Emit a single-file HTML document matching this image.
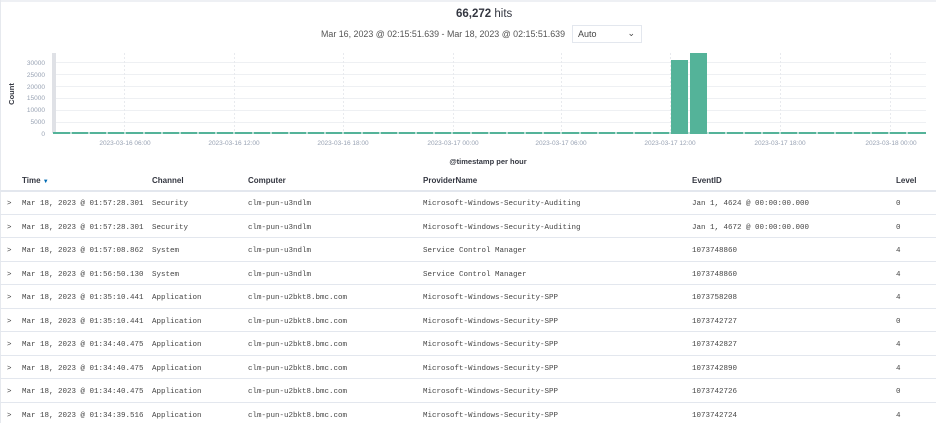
<!DOCTYPE html><html><head><style>
body{margin:0;width:936px;height:423px;background:#fff;position:relative;overflow:hidden;font-family:"Liberation Sans",sans-serif;color:#343741}
.a{position:absolute;white-space:nowrap}
.m{font-family:"Liberation Mono",monospace;font-size:7.5px;color:#444}
.h{font-size:8px;font-weight:bold;color:#343741}
.row{position:absolute;left:0;width:936px;height:1px;background:#e3e7ee}
</style></head><body>
<div class="a" style="left:0;top:0;width:936px;height:2px;background:#eef0f4"></div>
<div class="a" style="left:0;top:0;width:1px;height:423px;background:#e6e9ee"></div>
<div class="a" style="left:456px;top:8px;font-size:11.5px"><b>66,272</b> hits</div>
<div class="a" style="left:321px;top:29px;font-size:8.9px;color:#555">Mar 16, 2023 @ 02:15:51.639 - Mar 18, 2023 @ 02:15:51.639</div>
<div class="a" style="left:572px;top:25px;width:70px;height:18px;border:1px solid #e3e7ee;font-size:9px;color:#444;line-height:17px;box-sizing:border-box;padding-left:5px">Auto<span style="position:absolute;right:6px;top:-1px;font-size:9px">&#8964;</span></div>
<svg class="a" style="left:0;top:0" width="936" height="170">
<g stroke="#eef0f3" stroke-width="1">
<line x1="56" x2="926" y1="62.5" y2="62.5"/><line x1="56" x2="926" y1="74.5" y2="74.5"/><line x1="56" x2="926" y1="86.5" y2="86.5"/><line x1="56" x2="926" y1="98.5" y2="98.5"/><line x1="56" x2="926" y1="110.5" y2="110.5"/><line x1="56" x2="926" y1="122.5" y2="122.5"/>
</g>
<g stroke="#e8eaee" stroke-dasharray="2,2">
<line x1="124.5" x2="124.5" y1="53" y2="133"/><line x1="234.5" x2="234.5" y1="53" y2="133"/><line x1="343.5" x2="343.5" y1="53" y2="133"/><line x1="453.5" x2="453.5" y1="53" y2="133"/><line x1="561.5" x2="561.5" y1="53" y2="133"/><line x1="670.5" x2="670.5" y1="53" y2="133"/><line x1="780.5" x2="780.5" y1="53" y2="133"/><line x1="890.5" x2="890.5" y1="53" y2="133"/>
</g>
<rect x="52" y="53" width="4" height="80" fill="#dfe1e6"/>
<g fill="#54b399">
<rect x="53" y="132" width="873" height="2"/>
<rect x="671" y="60" width="17" height="74"/>
<rect x="690" y="53" width="17" height="81"/>
</g>
<g stroke="#fff" stroke-width="1.2">
<line x1="71" x2="71" y1="131" y2="135"/><line x1="89" x2="89" y1="131" y2="135"/><line x1="107" x2="107" y1="131" y2="135"/><line x1="125" x2="125" y1="131" y2="135"/><line x1="144" x2="144" y1="131" y2="135"/><line x1="162" x2="162" y1="131" y2="135"/><line x1="180" x2="180" y1="131" y2="135"/><line x1="198" x2="198" y1="131" y2="135"/><line x1="216" x2="216" y1="131" y2="135"/><line x1="234" x2="234" y1="131" y2="135"/><line x1="253" x2="253" y1="131" y2="135"/><line x1="271" x2="271" y1="131" y2="135"/><line x1="289" x2="289" y1="131" y2="135"/><line x1="307" x2="307" y1="131" y2="135"/><line x1="325" x2="325" y1="131" y2="135"/><line x1="343" x2="343" y1="131" y2="135"/><line x1="362" x2="362" y1="131" y2="135"/><line x1="380" x2="380" y1="131" y2="135"/><line x1="398" x2="398" y1="131" y2="135"/><line x1="416" x2="416" y1="131" y2="135"/><line x1="434" x2="434" y1="131" y2="135"/><line x1="452" x2="452" y1="131" y2="135"/><line x1="471" x2="471" y1="131" y2="135"/><line x1="489" x2="489" y1="131" y2="135"/><line x1="507" x2="507" y1="131" y2="135"/><line x1="525" x2="525" y1="131" y2="135"/><line x1="543" x2="543" y1="131" y2="135"/><line x1="561" x2="561" y1="131" y2="135"/><line x1="580" x2="580" y1="131" y2="135"/><line x1="598" x2="598" y1="131" y2="135"/><line x1="616" x2="616" y1="131" y2="135"/><line x1="634" x2="634" y1="131" y2="135"/><line x1="652" x2="652" y1="131" y2="135"/><line x1="670" x2="670" y1="131" y2="135"/><line x1="689" x2="689" y1="131" y2="135"/><line x1="708" x2="708" y1="131" y2="135"/><line x1="726" x2="726" y1="131" y2="135"/><line x1="744" x2="744" y1="131" y2="135"/><line x1="762" x2="762" y1="131" y2="135"/><line x1="780" x2="780" y1="131" y2="135"/><line x1="798" x2="798" y1="131" y2="135"/><line x1="817" x2="817" y1="131" y2="135"/><line x1="835" x2="835" y1="131" y2="135"/><line x1="853" x2="853" y1="131" y2="135"/><line x1="871" x2="871" y1="131" y2="135"/><line x1="889" x2="889" y1="131" y2="135"/><line x1="907" x2="907" y1="131" y2="135"/>
</g>
<g font-family="Liberation Sans" font-size="6.5" fill="#98a2b3" text-anchor="end">
<text x="45" y="65">30000</text><text x="45" y="77">25000</text><text x="45" y="89">20000</text><text x="45" y="100">15000</text><text x="45" y="112">10000</text><text x="45" y="124">5000</text><text x="45" y="136">0</text>
</g>
<g font-family="Liberation Sans" font-size="6.5" fill="#98a2b3" text-anchor="middle">
<text x="125" y="145">2023-03-16 06:00</text><text x="234" y="145">2023-03-16 12:00</text><text x="343" y="145">2023-03-16 18:00</text><text x="453" y="145">2023-03-17 00:00</text><text x="561" y="145">2023-03-17 06:00</text><text x="670" y="145">2023-03-17 12:00</text><text x="780" y="145">2023-03-17 18:00</text><text x="891" y="145">2023-03-18 00:00</text>
</g>
<text x="14" y="94" transform="rotate(-90 14 94)" font-family="Liberation Sans" font-size="7.5" font-weight="bold" fill="#343741" text-anchor="middle">Count</text>
<text x="488" y="164" font-family="Liberation Sans" font-size="7.5" font-weight="bold" fill="#343741" text-anchor="middle">@timestamp per hour</text>
</svg>
<div class="a h" style="left:22px;top:176px">Time <span style="color:#006bb4;font-size:6px">&#9660;</span></div>
<div class="a h" style="left:152px;top:176px">Channel</div>
<div class="a h" style="left:248px;top:176px">Computer</div>
<div class="a h" style="left:423px;top:176px">ProviderName</div>
<div class="a h" style="left:692px;top:176px">EventID</div>
<div class="a h" style="left:896px;top:176px">Level</div>
<div class="row" style="top:190px;height:2px"></div>
<div class="row" style="top:214px"></div><div class="row" style="top:237px"></div><div class="row" style="top:261px"></div><div class="row" style="top:284px"></div><div class="row" style="top:308px"></div><div class="row" style="top:331px"></div><div class="row" style="top:355px"></div><div class="row" style="top:378px"></div><div class="row" style="top:402px"></div>
<div class="a m" style="left:0;top:193px;line-height:23.5px">
<div style="position:relative"><span class="a" style="left:7px">&gt;</span><span class="a" style="left:22px">Mar 18, 2023 @ 01:57:28.301</span><span class="a" style="left:152px">Security</span><span class="a" style="left:248px">clm-pun-u3ndlm</span><span class="a" style="left:423px">Microsoft-Windows-Security-Auditing</span><span class="a" style="left:692px">Jan 1, 4624 @ 00:00:00.000</span><span class="a" style="left:896px">0</span>&nbsp;</div>
<div style="position:relative"><span class="a" style="left:7px">&gt;</span><span class="a" style="left:22px">Mar 18, 2023 @ 01:57:28.301</span><span class="a" style="left:152px">Security</span><span class="a" style="left:248px">clm-pun-u3ndlm</span><span class="a" style="left:423px">Microsoft-Windows-Security-Auditing</span><span class="a" style="left:692px">Jan 1, 4672 @ 00:00:00.000</span><span class="a" style="left:896px">0</span>&nbsp;</div>
<div style="position:relative"><span class="a" style="left:7px">&gt;</span><span class="a" style="left:22px">Mar 18, 2023 @ 01:57:08.862</span><span class="a" style="left:152px">System</span><span class="a" style="left:248px">clm-pun-u3ndlm</span><span class="a" style="left:423px">Service Control Manager</span><span class="a" style="left:692px">1073748860</span><span class="a" style="left:896px">4</span>&nbsp;</div>
<div style="position:relative"><span class="a" style="left:7px">&gt;</span><span class="a" style="left:22px">Mar 18, 2023 @ 01:56:50.130</span><span class="a" style="left:152px">System</span><span class="a" style="left:248px">clm-pun-u3ndlm</span><span class="a" style="left:423px">Service Control Manager</span><span class="a" style="left:692px">1073748860</span><span class="a" style="left:896px">4</span>&nbsp;</div>
<div style="position:relative"><span class="a" style="left:7px">&gt;</span><span class="a" style="left:22px">Mar 18, 2023 @ 01:35:10.441</span><span class="a" style="left:152px">Application</span><span class="a" style="left:248px">clm-pun-u2bkt8.bmc.com</span><span class="a" style="left:423px">Microsoft-Windows-Security-SPP</span><span class="a" style="left:692px">1073758208</span><span class="a" style="left:896px">4</span>&nbsp;</div>
<div style="position:relative"><span class="a" style="left:7px">&gt;</span><span class="a" style="left:22px">Mar 18, 2023 @ 01:35:10.441</span><span class="a" style="left:152px">Application</span><span class="a" style="left:248px">clm-pun-u2bkt8.bmc.com</span><span class="a" style="left:423px">Microsoft-Windows-Security-SPP</span><span class="a" style="left:692px">1073742727</span><span class="a" style="left:896px">0</span>&nbsp;</div>
<div style="position:relative"><span class="a" style="left:7px">&gt;</span><span class="a" style="left:22px">Mar 18, 2023 @ 01:34:40.475</span><span class="a" style="left:152px">Application</span><span class="a" style="left:248px">clm-pun-u2bkt8.bmc.com</span><span class="a" style="left:423px">Microsoft-Windows-Security-SPP</span><span class="a" style="left:692px">1073742827</span><span class="a" style="left:896px">4</span>&nbsp;</div>
<div style="position:relative"><span class="a" style="left:7px">&gt;</span><span class="a" style="left:22px">Mar 18, 2023 @ 01:34:40.475</span><span class="a" style="left:152px">Application</span><span class="a" style="left:248px">clm-pun-u2bkt8.bmc.com</span><span class="a" style="left:423px">Microsoft-Windows-Security-SPP</span><span class="a" style="left:692px">1073742890</span><span class="a" style="left:896px">4</span>&nbsp;</div>
<div style="position:relative"><span class="a" style="left:7px">&gt;</span><span class="a" style="left:22px">Mar 18, 2023 @ 01:34:40.475</span><span class="a" style="left:152px">Application</span><span class="a" style="left:248px">clm-pun-u2bkt8.bmc.com</span><span class="a" style="left:423px">Microsoft-Windows-Security-SPP</span><span class="a" style="left:692px">1073742726</span><span class="a" style="left:896px">0</span>&nbsp;</div>
<div style="position:relative"><span class="a" style="left:7px">&gt;</span><span class="a" style="left:22px">Mar 18, 2023 @ 01:34:39.516</span><span class="a" style="left:152px">Application</span><span class="a" style="left:248px">clm-pun-u2bkt8.bmc.com</span><span class="a" style="left:423px">Microsoft-Windows-Security-SPP</span><span class="a" style="left:692px">1073742724</span><span class="a" style="left:896px">4</span>&nbsp;</div>
</div>
</body></html>
